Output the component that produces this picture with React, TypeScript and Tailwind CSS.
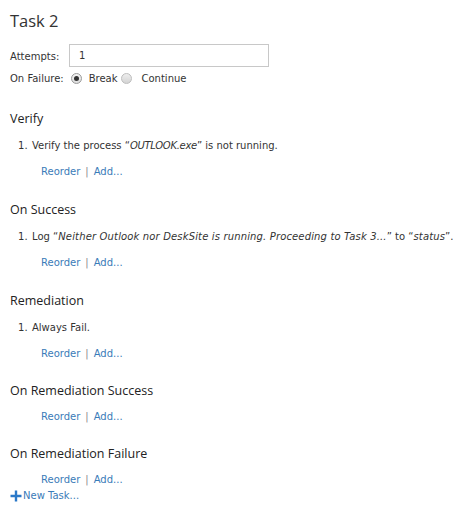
import React from "react";

type Section = { title: string; items: React.ReactNode[] };

const sections: Section[] = [
  {
    title: "Verify",
    items: [
      <>
        Verify the process “<i className="tracking-[-0.3px]">OUTLOOK.exe</i>” is not running.
      </>,
    ],
  },
  {
    title: "On Success",
    items: [
      <>
        Log “<i className="tracking-[0.15px]">Neither Outlook nor DeskSite is running. Proceeding to Task 3...</i>” to “
        <i className="tracking-[0.15px]">status</i>”.
      </>,
    ],
  },
  { title: "Remediation", items: [<>Always Fail.</>] },
  { title: "On Remediation Success", items: [] },
  { title: "On Remediation Failure", items: [] },
];

const Radio = ({ checked }: { checked?: boolean }) => (
  <span
    className={
      checked
        ? "inline-flex h-[11px] w-[11px] items-center justify-center rounded-full border border-[#9a9a9a] bg-gradient-to-b from-[#f4f4f4] to-[#dcdcdc]"
        : "inline-flex h-[11px] w-[11px] items-center justify-center rounded-full border border-[#bdbdbd] bg-gradient-to-b from-[#eeeeee] to-[#d4d4d4]"
    }
  >
    {checked && <span className="h-[5px] w-[5px] rounded-full bg-[#333]" />}
  </span>
);

const Links = () => (
  <div className="pl-[31px] text-[#3a7bb8]">
    <span>Reorder</span>
    <span className="mx-[5px] text-[#8a8a8a]">|</span>
    <span>Add...</span>
  </div>
);

export default function App() {
  return (
    <div className="min-h-screen w-[474px] bg-white px-[10px] pt-[8px] font-['DejaVu_Sans',Tahoma,sans-serif] text-[10px] text-[#333]">
      <h1 className="h-[26px] font-['Open_Sans',sans-serif] text-[16.5px] leading-[26px] text-[#333]">
        Task 2
      </h1>

      <div className="mt-[10px] flex h-[23px] items-center">
        <span className="w-[59px] pt-[2px]">Attempts:</span>
        <div className="flex h-[23px] w-[200px] items-center border border-[#c8c8c8] pl-[9px]">1</div>
      </div>

      <div className="mt-[3px] flex h-[16px] items-center">
        <span>On Failure:</span>
        <span className="ml-[7px] flex"><Radio checked /></span>
        <span className="ml-[7px]">Break</span>
        <span className="ml-[3px] flex"><Radio /></span>
        <span className="ml-[10px]">Continue</span>
      </div>

      <div className="mt-[19px]">
        {sections.map((s) => (
          <section key={s.title}>
            <h2
              className={
                s.items.length
                  ? "h-[27px] font-['Open_Sans',sans-serif] text-[12.5px] leading-[27px] text-[#222]"
                  : "h-[25px] font-['Open_Sans',sans-serif] text-[12.5px] leading-[25px] text-[#222]"
              }
            >
              {s.title}
            </h2>
            {s.items.map((it, i) => (
              <div key={i} className="flex h-[26px] items-center pl-[8px]">
                <span className="w-[14px]">{i + 1}.</span>
                <span>{it}</span>
              </div>
            ))}
            {s.title !== "On Remediation Failure" ? (
              <div className="flex h-[38px] items-start pt-[6px]">
                <Links />
              </div>
            ) : (
              <div className="flex h-[16px] items-start pt-[6px]">
                <Links />
              </div>
            )}
          </section>
        ))}
        <div className="mt-[6px] flex items-center text-[#3a7bb8]">
          <svg width="12" height="12" viewBox="0 0 12 12" className="mr-[1px]">
            <path d="M6 0.5v11M0.5 6h11" stroke="#2a78c8" strokeWidth="2.4" />
          </svg>
          <span>New Task...</span>
        </div>
      </div>
    </div>
  );
}
